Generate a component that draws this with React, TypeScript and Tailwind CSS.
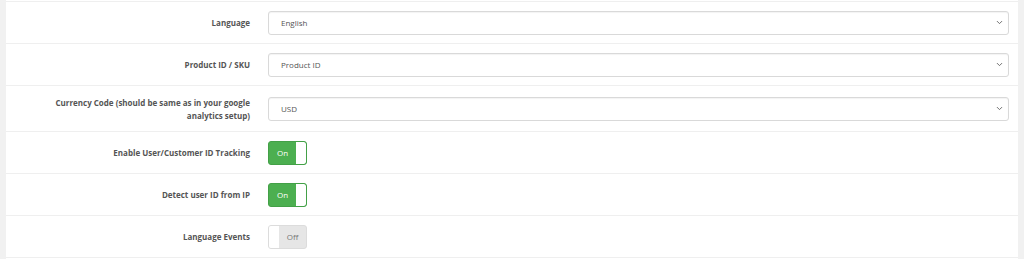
import { ChevronDown } from 'lucide-react';

const selects = [
  { label: 'Language', value: 'English' },
  { label: 'Product ID / SKU', value: 'Product ID' },
  { label: 'Currency Code (should be same as in your google analytics setup)', value: 'USD', tall: true },
];

const toggles = [
  { label: 'Enable User/Customer ID Tracking', on: true },
  { label: 'Detect user ID from IP', on: true },
  { label: 'Language Events', on: false },
];

function Toggle({ on }: { on: boolean }) {
  if (on) {
    return (
      <div className="flex h-[24px] w-[39px] rounded-[3px] border border-[#43a047] bg-[#4caf50] overflow-hidden">
        <div className="flex-1 flex items-center justify-center text-[8px] text-white">On</div>
        <div className="w-[10px] bg-white rounded-r-[2px]" />
      </div>
    );
  }
  return (
    <div className="flex h-[24px] w-[39px] rounded-[3px] border border-[#dcdcdc] bg-[#e6e6e6] overflow-hidden">
      <div className="w-[10px] bg-white" />
      <div className="flex-1 flex items-center justify-center text-[8px] text-[#777]">Off</div>
    </div>
  );
}

function Row({ label, children, tall }: { label: string; children: React.ReactNode; tall?: boolean }) {
  return (
    <div className={`flex items-center border-b border-[#efefef] ${tall ? 'h-[46px]' : 'h-[42px]'}`}>
      <div className="w-[262px] shrink-0 pl-[40px] pr-[18px] text-right text-[8px] font-bold leading-[13px] text-[#555]">
        {label}
      </div>
      <div className="flex-1 pr-[9px]">{children}</div>
    </div>
  );
}

export default function App() {
  return (
    <div className="flex w-[1024px] h-[259px] bg-[#f1f1f1] font-['Open_Sans',sans-serif]">
      <div className="ml-[6px] w-[1012px] bg-white">
        <div className="h-[1px] mt-[1px] bg-[#efefef]" />
        {selects.map((s) => (
          <Row key={s.label} label={s.label} tall={s.tall}>
            <div className="flex h-[24px] items-center justify-between rounded-[3px] border border-[#d9d9d9] bg-white pl-[12px] pr-[4px] text-[8px] text-[#555] shadow-[inset_0_1px_1px_rgba(0,0,0,0.05)]">
              <span>{s.value}</span>
              <ChevronDown size={9} strokeWidth={2.5} className="text-[#666]" />
            </div>
          </Row>
        ))}
        {toggles.map((t) => (
          <Row key={t.label} label={t.label}>
            <Toggle on={t.on} />
          </Row>
        ))}
      </div>
    </div>
  );
}
